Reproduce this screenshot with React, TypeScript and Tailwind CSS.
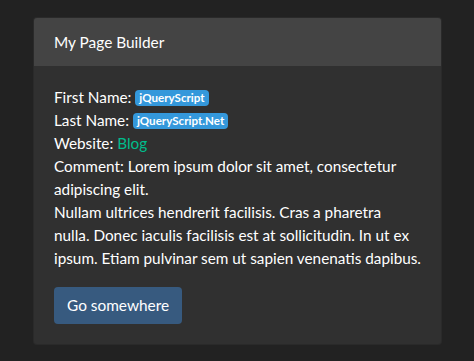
import React from "react";

export default function App() {
  return (
    <div
      className="min-h-[361px] w-full bg-[#222222] pt-[17px] pl-[33px] text-white"
      style={{ fontFamily: "Lato, 'Noto Sans', sans-serif" }}
    >
      <div className="w-[409px] overflow-hidden rounded-[4px] border border-[rgba(0,0,0,0.125)] bg-[#303030]">
        <div className="bg-[#444444] px-[20px] py-[13px] text-[15.4px] leading-[22px]">
          My Page Builder
        </div>
        <div className="px-[20px] pt-[20px] pb-[20px] text-[15.3px] leading-[23px]">
          <p className="mb-[17px] whitespace-nowrap">
            First Name:{" "}
            <span className="inline-block rounded-[4px] bg-[#3498db] px-[4px] py-[2px] align-[1px] text-[11.6px] font-bold leading-[12px]">
              jQueryScript
            </span>
            <br />
            Last Name:{" "}
            <span className="inline-block rounded-[4px] bg-[#3498db] px-[4px] py-[2px] align-[1px] text-[11.6px] font-bold leading-[12px]">
              jQueryScript.Net
            </span>
            <br />
            Website: <span className="text-[#00bc8c]">Blog</span>
            <br />
            Comment: Lorem ipsum dolor sit amet, consectetur
            <br />
            adipiscing elit.
            <br />
            Nullam ultrices hendrerit facilisis. Cras a pharetra
            <br />
            nulla. Donec iaculis facilisis est at sollicitudin. In ut ex
            <br />
            ipsum. Etiam pulvinar sem ut sapien venenatis dapibus.
          </p>
          <button className="rounded-[4px] bg-[#375a7f] px-[13px] py-[7px] text-[15.4px] leading-[23px] text-white">
            Go somewhere
          </button>
        </div>
      </div>
    </div>
  );
}
